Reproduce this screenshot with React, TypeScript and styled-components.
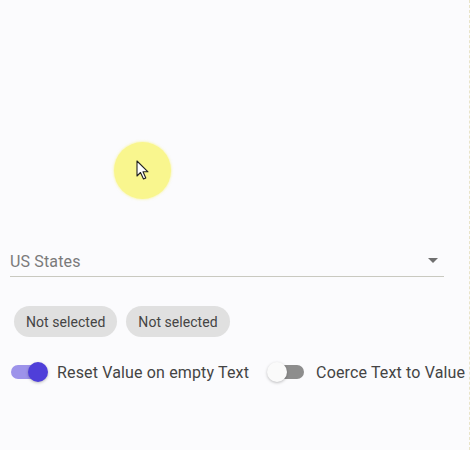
import React, { useState } from 'react';
import styled, { createGlobalStyle } from 'styled-components';

const GlobalStyle = createGlobalStyle`
    html, body {
        margin: 0;
        padding: 0;
        background: #fbfbfd;
        font-family: Roboto, "Liberation Sans", sans-serif;
        letter-spacing: 0.15px;
    }
`;

const Page = styled.div`
    position: relative;
    width: 470px;
    height: 450px;
    box-sizing: border-box;
    padding: 244px 25px 0 10px;
    border-right: 1px dashed #e9e4c8;
    overflow: hidden;
`;

const SelectField = styled.div`
    display: flex;
    align-items: center;
    justify-content: space-between;
    height: 33px;
    border-bottom: 1px solid #c9c9c0;
    box-sizing: border-box;
`;

const SelectLabel = styled.span`
    font-size: 16px;
    color: #7a7a7a;
    padding-top: 2px;
`;

const Arrow = styled.span`
    width: 0;
    height: 0;
    margin-right: 6px;
    border-left: 5px solid transparent;
    border-right: 5px solid transparent;
    border-top: 5px solid #6f6f6f;
`;

const ChipRow = styled.div`
    display: flex;
    gap: 9px;
    padding: 29px 0 0 4px;
`;

const Chip = styled.span`
    display: inline-flex;
    align-items: center;
    height: 31px;
    padding: 0 12px;
    border-radius: 16px;
    background: #e0e0e0;
    color: #444;
    font-size: 14px;
    letter-spacing: 0.05px;
`;

const SwitchRow = styled.div`
    display: flex;
    align-items: center;
    padding: 25px 0 0 1px;
`;

const SwitchItem = styled.label`
    display: flex;
    align-items: center;
    margin-right: 21px;
    cursor: pointer;
`;

const SwitchBox = styled.span`
    position: relative;
    width: 34px;
    height: 20px;
    margin-right: 12px;
`;

const Track = styled.span<{ $on: boolean }>`
    position: absolute;
    left: 0;
    top: 3px;
    width: 34px;
    height: 14px;
    border-radius: 7px;
    background: ${(p) => (p.$on ? '#9d93ea' : '#8d8d8d')};
`;

const Thumb = styled.span<{ $on: boolean }>`
    position: absolute;
    top: 0;
    left: ${(p) => (p.$on ? '17px' : '-3px')};
    width: 20px;
    height: 20px;
    border-radius: 50%;
    background: ${(p) => (p.$on ? '#4f3fd9' : '#fafafa')};
    box-shadow: 0 1px 3px rgba(0, 0, 0, 0.25);
`;

const SwitchLabel = styled.span`
    font-size: 16px;
    color: #444;
    white-space: nowrap;
`;

const CursorHalo = styled.div`
    position: absolute;
    left: 114px;
    top: 142px;
    width: 57px;
    height: 57px;
    border-radius: 50%;
    background: #f9f68e;
    box-shadow: 0 0 2px 1px rgba(249, 246, 142, 0.5);
`;

const CursorIcon = styled.svg`
    position: absolute;
    left: 136px;
    top: 160px;
`;

function Toggle({ label, initial }: { label: string; initial: boolean }) {
    const [on, setOn] = useState(initial);
    return (
        <SwitchItem onClick={() => setOn((v) => !v)}>
            <SwitchBox>
                <Track $on={on} />
                <Thumb $on={on} />
            </SwitchBox>
            <SwitchLabel>{label}</SwitchLabel>
        </SwitchItem>
    );
}

export default function App() {
    return (
        <Page>
            <GlobalStyle />
            <SelectField>
                <SelectLabel>US States</SelectLabel>
                <Arrow />
            </SelectField>
            <ChipRow>
                <Chip>Not selected</Chip>
                <Chip>Not selected</Chip>
            </ChipRow>
            <SwitchRow>
                <Toggle label="Reset Value on empty Text" initial />
                <Toggle label="Coerce Text to Value" initial={false} />
            </SwitchRow>
            <CursorHalo />
            <CursorIcon width="14" height="20" viewBox="0 0 14 20">
                <path
                    d="M1 1 L1 16 L4.5 12.5 L7.5 19 L9.8 18 L7 11.8 L12 11.8 Z"
                    fill="#fff"
                    stroke="#222"
                    strokeWidth="1.1"
                    strokeLinejoin="round"
                />
            </CursorIcon>
        </Page>
    );
}
